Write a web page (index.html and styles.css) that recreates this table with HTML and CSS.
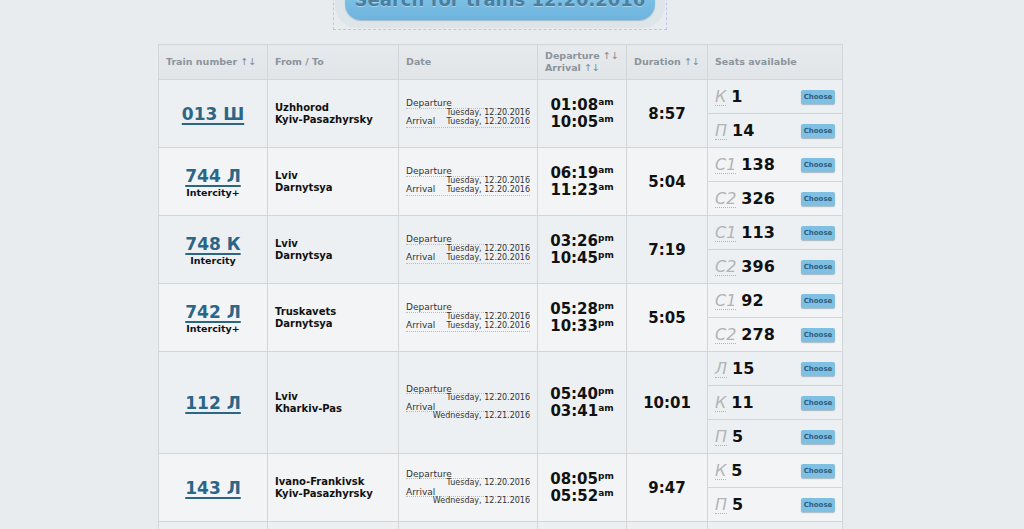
FILE: index.html
```html
<!DOCTYPE html>
<html lang="en">
<head>
<meta charset="utf-8">
<title>Trains</title>
<link rel="stylesheet" href="styles.css">
</head>
<body>
<div class="page">
  <div class="search">
    <div class="search-wrap">
      <button class="search-btn" type="button">Search for trains 12.20.2016</button>
    </div>
  </div>

  <table class="trains">
    <colgroup>
      <col class="c-num"><col class="c-route"><col class="c-date"><col class="c-time"><col class="c-dur"><col class="c-seats">
    </colgroup>
    <thead>
      <tr>
        <th>Train number <span class="sort">↑↓</span></th>
        <th>From / To</th>
        <th>Date</th>
        <th>Departure <span class="sort">↑↓</span><br>Arrival <span class="sort">↑↓</span></th>
        <th>Duration <span class="sort">↑↓</span></th>
        <th>Seats available</th>
      </tr>
    </thead>
    <tbody>
      <tr>
        <td class="num"><a href="#">013 Ш</a></td>
        <td class="route">Uzhhorod<br>Kyiv-Pasazhyrsky</td>
        <td class="date">
          <div class="dl"><span>Departure</span></div>
          <div class="dd">Tuesday, 12.20.2016</div>
          <div class="dl"><span>Arrival</span><span class="dv">Tuesday, 12.20.2016</span></div>
        </td>
        <td class="time">01:08<sup>am</sup><br>10:05<sup>am</sup></td>
        <td class="dur">8:57</td>
        <td class="seats">
          <div class="seat"><abbr>К</abbr><b>1</b><button type="button">Choose</button></div>
          <div class="seat"><abbr>П</abbr><b>14</b><button type="button">Choose</button></div>
        </td>
      </tr>
      <tr>
        <td class="num"><a href="#">744 Л</a><div class="kind">Intercity+</div></td>
        <td class="route">Lviv<br>Darnytsya</td>
        <td class="date">
          <div class="dl"><span>Departure</span></div>
          <div class="dd">Tuesday, 12.20.2016</div>
          <div class="dl"><span>Arrival</span><span class="dv">Tuesday, 12.20.2016</span></div>
        </td>
        <td class="time">06:19<sup>am</sup><br>11:23<sup>am</sup></td>
        <td class="dur">5:04</td>
        <td class="seats">
          <div class="seat"><abbr>С1</abbr><b>138</b><button type="button">Choose</button></div>
          <div class="seat"><abbr>С2</abbr><b>326</b><button type="button">Choose</button></div>
        </td>
      </tr>
      <tr>
        <td class="num"><a href="#">748 К</a><div class="kind">Intercity</div></td>
        <td class="route">Lviv<br>Darnytsya</td>
        <td class="date">
          <div class="dl"><span>Departure</span></div>
          <div class="dd">Tuesday, 12.20.2016</div>
          <div class="dl"><span>Arrival</span><span class="dv">Tuesday, 12.20.2016</span></div>
        </td>
        <td class="time">03:26<sup>pm</sup><br>10:45<sup>pm</sup></td>
        <td class="dur">7:19</td>
        <td class="seats">
          <div class="seat"><abbr>С1</abbr><b>113</b><button type="button">Choose</button></div>
          <div class="seat"><abbr>С2</abbr><b>396</b><button type="button">Choose</button></div>
        </td>
      </tr>
      <tr>
        <td class="num"><a href="#">742 Л</a><div class="kind">Intercity+</div></td>
        <td class="route">Truskavets<br>Darnytsya</td>
        <td class="date">
          <div class="dl"><span>Departure</span></div>
          <div class="dd">Tuesday, 12.20.2016</div>
          <div class="dl"><span>Arrival</span><span class="dv">Tuesday, 12.20.2016</span></div>
        </td>
        <td class="time">05:28<sup>pm</sup><br>10:33<sup>pm</sup></td>
        <td class="dur">5:05</td>
        <td class="seats">
          <div class="seat"><abbr>С1</abbr><b>92</b><button type="button">Choose</button></div>
          <div class="seat"><abbr>С2</abbr><b>278</b><button type="button">Choose</button></div>
        </td>
      </tr>
      <tr>
        <td class="num"><a href="#">112 Л</a></td>
        <td class="route">Lviv<br>Kharkiv-Pas</td>
        <td class="date">
          <div class="dl"><span>Departure</span></div>
          <div class="dd">Tuesday, 12.20.2016</div>
          <div class="dl"><span>Arrival</span></div>
          <div class="dd">Wednesday, 12.21.2016</div>
        </td>
        <td class="time">05:40<sup>pm</sup><br>03:41<sup>am</sup></td>
        <td class="dur">10:01</td>
        <td class="seats">
          <div class="seat"><abbr>Л</abbr><b>15</b><button type="button">Choose</button></div>
          <div class="seat"><abbr>К</abbr><b>11</b><button type="button">Choose</button></div>
          <div class="seat"><abbr>П</abbr><b>5</b><button type="button">Choose</button></div>
        </td>
      </tr>
      <tr>
        <td class="num"><a href="#">143 Л</a></td>
        <td class="route">Ivano-Frankivsk<br>Kyiv-Pasazhyrsky</td>
        <td class="date">
          <div class="dl"><span>Departure</span></div>
          <div class="dd">Tuesday, 12.20.2016</div>
          <div class="dl"><span>Arrival</span></div>
          <div class="dd">Wednesday, 12.21.2016</div>
        </td>
        <td class="time">08:05<sup>pm</sup><br>05:52<sup>am</sup></td>
        <td class="dur">9:47</td>
        <td class="seats">
          <div class="seat"><abbr>К</abbr><b>5</b><button type="button">Choose</button></div>
          <div class="seat"><abbr>П</abbr><b>5</b><button type="button">Choose</button></div>
        </td>
      </tr>
      <tr>
        <td class="num"><a href="#">092 Л</a></td>
        <td class="route">Lviv<br>Kyiv-Pasazhyrsky</td>
        <td class="date">
          <div class="dl"><span>Departure</span></div>
          <div class="dd">Tuesday, 12.20.2016</div>
          <div class="dl"><span>Arrival</span></div>
          <div class="dd">Wednesday, 12.21.2016</div>
        </td>
        <td class="time">09:56<sup>pm</sup><br>07:28<sup>am</sup></td>
        <td class="dur">9:32</td>
        <td class="seats">
          <div class="seat"><abbr>К</abbr><b>24</b><button type="button">Choose</button></div>
          <div class="seat"><abbr>П</abbr><b>7</b><button type="button">Choose</button></div>
        </td>
      </tr>
    </tbody>
  </table>
</div>
</body>
</html>
```

FILE: styles.css
```css
html, body {
  margin: 0;
  padding: 0;
}
body {
  background: #e9ecef;
  font-family: "DejaVu Sans", Verdana, sans-serif;
  color: #111;
  overflow: hidden;
}
.page {
  width: 684px;
  margin-left: 158px;
}

/* search button (scrolled partly out of view) */
.search {
  width: 330px;
  margin: -32px auto 0;
  padding: 1px;
  border: 1px dashed #c6c1f0;
}
.search-wrap {
  padding: 10px 10px 8px;
  background: #dee5e9;
  border-radius: 0 0 22px 22px;
}
.search-btn {
  display: block;
  width: 100%;
  height: 40px;
  border: 0;
  border-radius: 0 0 16px 16px;
  background: linear-gradient(#8ccaec, #6cb3dd);
  box-shadow: 0 1px 1px rgba(60, 110, 140, 0.35);
  font-family: "DejaVu Sans", Verdana, sans-serif;
  font-size: 18px;
  font-weight: bold;
  line-height: 40px;
  color: #4a7f9f;
  text-shadow: 0 1px 0 rgba(255, 255, 255, 0.35);
  padding: 0;
}

/* table */
.trains {
  margin-top: 14px;
  width: 684px;
  table-layout: fixed;
  border-collapse: collapse;
  border: 1px solid #d2d6d9;
}
.c-num { width: 109px; }
.c-route { width: 131px; }
.c-date { width: 139px; }
.c-time { width: 89px; }
.c-dur { width: 81px; }
.c-seats { width: 135px; }

.trains th {
  height: 34px;
  padding: 0 6px 0 7px;
  background: linear-gradient(#e7eaed, #e1e5e8);
  border: 1px solid #d2d6d9;
  color: #8b949b;
  font-size: 9.5px;
  font-weight: bold;
  line-height: 12px;
  text-align: left;
  vertical-align: middle;
  white-space: nowrap;
}
.sort {
  font-weight: normal;
  color: #7f888f;
}
.trains td {
  border: 1px solid #d2d6d9;
  vertical-align: middle;
  padding: 0 7px;
}
.trains tbody tr:nth-child(odd) td { background: #edf0f2; }
.trains tbody tr:nth-child(even) td { background: #f2f4f6; }

.num {
  text-align: center;
}
.num a {
  color: #2c6686;
  font-size: 17px;
  font-weight: bold;
  text-decoration: underline;
  text-decoration-thickness: 2px;
  text-underline-offset: 3px;
}
.kind {
  margin-top: 1px;
  font-size: 9.5px;
  font-weight: bold;
  line-height: 11px;
  color: #111;
}
.route {
  font-size: 10px;
  font-weight: bold;
  line-height: 12px;
}

.date {
  color: #333;
}
.dl {
  display: flex;
  justify-content: space-between;
  align-items: baseline;
  border-bottom: 1px dotted #b9bcbf;
  font-size: 9px;
  line-height: 8.5px;
}
.dv {
  font-size: 8px;
}
.dd {
  font-size: 8px;
  line-height: 8.5px;
  text-align: right;
}

.time {
  text-align: center;
  font-size: 15px;
  font-weight: bold;
  line-height: 17px;
}
.time sup {
  font-size: 9px;
  line-height: 0;
  vertical-align: 5px;
}
.dur {
  text-align: center;
  font-size: 15px;
  font-weight: bold;
}

.trains td.seats {
  padding: 0;
}
.seat {
  display: flex;
  align-items: center;
  height: 33px;
  padding: 0 7px 0 7px;
}
.seat + .seat {
  border-top: 1px solid #d2d6d9;
}
.seat abbr {
  font-size: 16px;
  font-style: italic;
  color: #b2b4b6;
  text-decoration: none;
  border-bottom: 1px dotted #b2b4b6;
  line-height: 17px;
  margin-right: 5px;
}
.seat b {
  font-size: 16px;
  font-weight: bold;
}
.seat button {
  margin-left: auto;
  width: 34px;
  height: 14px;
  padding: 0;
  border: 0;
  border-radius: 2px;
  background: #7fbfe1;
  box-shadow: 0 1px 1px rgba(40, 80, 110, 0.35);
  font-family: "DejaVu Sans", Verdana, sans-serif;
  font-size: 7px;
  font-weight: bold;
  color: #2f607f;
  line-height: 14px;
}
```
